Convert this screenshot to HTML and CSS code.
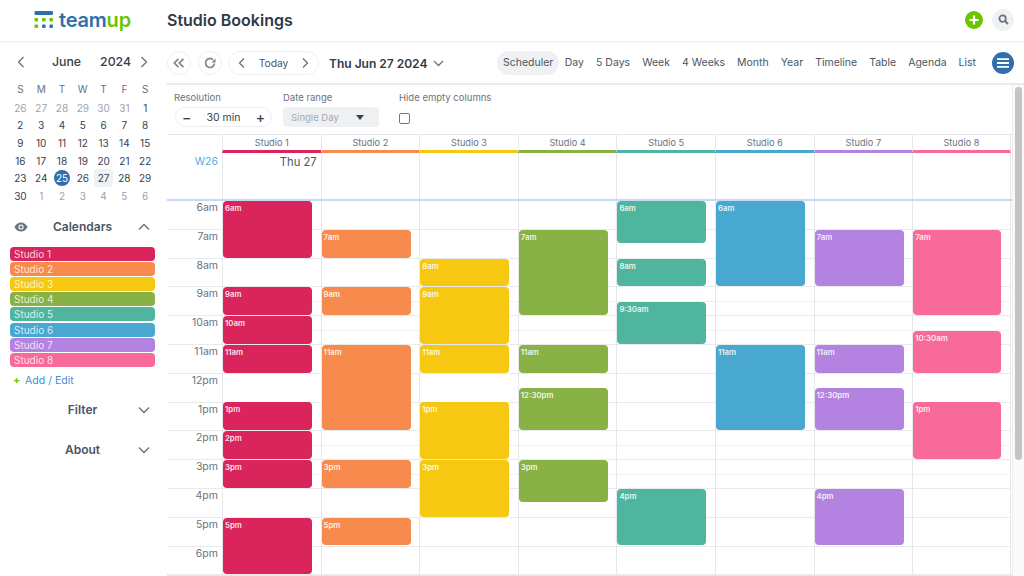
FILE: index.html
```html
<!DOCTYPE html>
<html lang="en">
  <head>
    <meta charset="UTF-8" />
    <meta name="viewport" content="width=device-width, initial-scale=1.0" />
    <title>Studio Bookings - Teamup</title>
    <link rel="stylesheet" href="styles.css">
  </head>
  <body>
    <div class="header">
      <div class="logo">
        <svg width="20" height="18" viewBox="0 0 20 18">
          <rect x="0.5" y="0" width="18.500" height="4" rx="1.200" fill="#2f6fad" />
          <g fill="#6cc400">
            <rect x="0.5" y="7" width="3.600" height="3.400" rx="1" />
            <rect x="8" y="7" width="3.600" height="3.400" rx="1" />
            <rect x="15.400" y="7" width="3.600" height="3.400" rx="1" />
            <rect x="0.5" y="13.500" width="3.600" height="3.400" rx="1" />
          </g>
          <g fill="#2f6fad">
            <rect x="8" y="13.500" width="3.600" height="3.400" rx="1" />
            <rect x="15.400" y="13.500" width="3.600" height="3.400" rx="1" />
          </g>
        </svg>
        <span class="logo-text">team<b>up</b></span>
      </div>
      <div class="page-title">Studio Bookings</div>
      <div class="header-actions">
        <button class="add-button">
          <svg width="10" height="10" viewBox="0 0 10 10"><path d="M5 0.5v9M0.5 5h9" stroke="#fff" stroke-width="2.200" /></svg>
        </button>
        <button class="search-button">
          <svg width="11" height="11" viewBox="0 0 11 11"><circle cx="4.600" cy="4.600" r="3.200" fill="none" stroke="#6b7280" stroke-width="1.800" /><path d="M7 7l3 3" stroke="#6b7280" stroke-width="2" /></svg>
        </button>
      </div>
    </div>

    <div class="page">
      <div class="sidebar">
        <div class="month-nav">
          <svg class="chev" width="8" height="12" viewBox="0 0 8 12"><path d="M6.500 1L1.500 6l5 5" /></svg>
          <span class="month-name">June</span>
          <span class="month-year">2024</span>
          <svg class="chev" width="8" height="12" viewBox="0 0 8 12"><path d="M1.500 1l5 5-5 5" /></svg>
        </div>
        <div class="mini-cal">
          <span class="dow">S</span><span class="dow">M</span><span class="dow">T</span><span class="dow">W</span><span class="dow">T</span><span class="dow">F</span><span class="dow">S</span>
          <span class="out">26</span><span class="out">27</span><span class="out">28</span><span class="out">29</span><span class="out">30</span><span class="out">31</span><span>1</span>
          <span>2</span><span>3</span><span>4</span><span>5</span><span>6</span><span>7</span><span>8</span>
          <span>9</span><span>10</span><span>11</span><span>12</span><span>13</span><span>14</span><span>15</span>
          <span>16</span><span>17</span><span>18</span><span>19</span><span>20</span><span>21</span><span>22</span>
          <span>23</span><span>24</span><span class="today">25</span><span>26</span><span class="picked">27</span><span>28</span><span>29</span>
          <span>30</span><span class="out">1</span><span class="out">2</span><span class="out">3</span><span class="out">4</span><span class="out">5</span><span class="out">6</span>
        </div>

        <div class="side-head calendars-head">
          <svg class="eye" width="14" height="10" viewBox="0 0 14 10"><path d="M0.500 5C2 2 4.300 0.500 7 0.500S12 2 13.500 5C12 8 9.700 9.500 7 9.500S2 8 0.500 5z" fill="#6b7280" /><circle cx="7" cy="5" r="2.600" fill="#fff" /><circle cx="7" cy="5" r="1.500" fill="#6b7280" /></svg>
          <span class="side-title">Calendars</span>
          <svg class="chev" width="12" height="8" viewBox="0 0 12 8"><path d="M1 6.500l5-5 5 5" /></svg>
        </div>
        <div class="cal-list">
          <div class="cal-item c1">Studio 1</div>
          <div class="cal-item c2">Studio 2</div>
          <div class="cal-item c3">Studio 3</div>
          <div class="cal-item c4">Studio 4</div>
          <div class="cal-item c5">Studio 5</div>
          <div class="cal-item c6">Studio 6</div>
          <div class="cal-item c7">Studio 7</div>
          <div class="cal-item c8">Studio 8</div>
        </div>
        <div class="add-edit"><b>+</b> Add / Edit</div>
        <div class="side-head filter-head">
          <span class="side-title">Filter</span>
          <svg class="chev" width="12" height="8" viewBox="0 0 12 8"><path d="M1 1.500l5 5 5-5" /></svg>
        </div>
        <div class="side-head about-head">
          <span class="side-title">About</span>
          <svg class="chev" width="12" height="8" viewBox="0 0 12 8"><path d="M1 1.500l5 5 5-5" /></svg>
        </div>
      </div>

      <div class="main">
        <div class="toolbar">
          <button class="round-button">
            <svg class="chev thick" width="12" height="10" viewBox="0 0 12 10"><path d="M5.500 0.800L1.300 5l4.200 4.200M10.500 0.800L6.300 5l4.200 4.200" /></svg>
          </button>
          <button class="round-button">
            <svg class="chev thick" width="12" height="12" viewBox="0 0 12 12"><path d="M10.500 6.500A4.500 4.500 0 1 1 9 2.600" /><path class="solid" d="M11.500 1.500v4H7.500z" /></svg>
          </button>
          <div class="today-group">
            <svg class="chev" width="8" height="12" viewBox="0 0 8 12"><path d="M6 1.500L1.500 6 6 10.500" /></svg>
            <span>Today</span>
            <svg class="chev" width="8" height="12" viewBox="0 0 8 12"><path d="M2 1.500L6.500 6 2 10.500" /></svg>
          </div>
          <div class="current-date">Thu Jun 27 2024</div>
          <svg class="chev date-chev" width="11" height="7" viewBox="0 0 11 7"><path d="M1 1l4.500 4.500L10 1" /></svg>
          <div class="views">
            <span class="view active">Scheduler</span>
            <span class="view">Day</span>
            <span class="view">5 Days</span>
            <span class="view">Week</span>
            <span class="view">4 Weeks</span>
            <span class="view">Month</span>
            <span class="view">Year</span>
            <span class="view">Timeline</span>
            <span class="view">Table</span>
            <span class="view">Agenda</span>
            <span class="view">List</span>
          </div>
          <button class="menu-button">
            <svg width="12" height="10" viewBox="0 0 12 10"><path d="M0 1.200h12M0 5h12M0 8.800h12" stroke="#fff" stroke-width="1.800" /></svg>
          </button>
        </div>

        <div class="scroll-area">
          <div class="calendar">
            <div class="options">
              <div class="option option-res">
                <label>Resolution</label>
                <div class="stepper"><b>−</b><span>30 min</span><b>+</b></div>
              </div>
              <div class="option option-range">
                <label>Date range</label>
                <div class="select"><span>Single Day</span><i></i></div>
              </div>
              <div class="option">
                <label>Hide empty columns</label>
                <div class="checkbox"></div>
              </div>
            </div>

            <div class="col-heads">
              <div class="gutter"></div>
              <div class="col-head b1">Studio 1</div>
              <div class="col-head b2">Studio 2</div>
              <div class="col-head b3">Studio 3</div>
              <div class="col-head b4">Studio 4</div>
              <div class="col-head b5">Studio 5</div>
              <div class="col-head b6">Studio 6</div>
              <div class="col-head b7">Studio 7</div>
              <div class="col-head b8">Studio 8</div>
            </div>

            <div class="all-day">
              <div class="gutter week-no">W26</div>
              <div class="all-day-cell day-label">Thu 27</div>
              <div class="all-day-cell"></div>
              <div class="all-day-cell"></div>
              <div class="all-day-cell"></div>
              <div class="all-day-cell"></div>
              <div class="all-day-cell"></div>
              <div class="all-day-cell"></div>
              <div class="all-day-cell"></div>
            </div>

            <div class="times">
              <div class="hours">
                <div class="hour">6am</div>
                <div class="hour">7am</div>
                <div class="hour">8am</div>
                <div class="hour">9am</div>
                <div class="hour">10am</div>
                <div class="hour">11am</div>
                <div class="hour">12pm</div>
                <div class="hour">1pm</div>
                <div class="hour">2pm</div>
                <div class="hour">3pm</div>
                <div class="hour">4pm</div>
                <div class="hour">5pm</div>
                <div class="hour">6pm</div>
              </div>

              <div class="day-col c1">
                <div class="event" style="grid-row: 1 / 5">6am</div>
                <div class="event" style="grid-row: 7 / 9">9am</div>
                <div class="event" style="grid-row: 9 / 11">10am</div>
                <div class="event" style="grid-row: 11 / 13">11am</div>
                <div class="event" style="grid-row: 15 / 17">1pm</div>
                <div class="event" style="grid-row: 17 / 19">2pm</div>
                <div class="event" style="grid-row: 19 / 21">3pm</div>
                <div class="event" style="grid-row: 23 / 27">5pm</div>
              </div>
              <div class="day-col c2">
                <div class="event" style="grid-row: 3 / 5">7am</div>
                <div class="event" style="grid-row: 7 / 9">9am</div>
                <div class="event" style="grid-row: 11 / 17">11am</div>
                <div class="event" style="grid-row: 19 / 21">3pm</div>
                <div class="event" style="grid-row: 23 / 25">5pm</div>
              </div>
              <div class="day-col c3">
                <div class="event" style="grid-row: 5 / 7">8am</div>
                <div class="event" style="grid-row: 7 / 11">9am</div>
                <div class="event" style="grid-row: 11 / 13">11am</div>
                <div class="event" style="grid-row: 15 / 19">1pm</div>
                <div class="event" style="grid-row: 19 / 23">3pm</div>
              </div>
              <div class="day-col c4">
                <div class="event" style="grid-row: 3 / 9">7am</div>
                <div class="event" style="grid-row: 11 / 13">11am</div>
                <div class="event" style="grid-row: 14 / 17">12:30pm</div>
                <div class="event" style="grid-row: 19 / 22">3pm</div>
              </div>
              <div class="day-col c5">
                <div class="event" style="grid-row: 1 / 4">6am</div>
                <div class="event" style="grid-row: 5 / 7">8am</div>
                <div class="event" style="grid-row: 8 / 11">9:30am</div>
                <div class="event" style="grid-row: 21 / 25">4pm</div>
              </div>
              <div class="day-col c6">
                <div class="event" style="grid-row: 1 / 7">6am</div>
                <div class="event" style="grid-row: 11 / 17">11am</div>
              </div>
              <div class="day-col c7">
                <div class="event" style="grid-row: 3 / 7">7am</div>
                <div class="event" style="grid-row: 11 / 13">11am</div>
                <div class="event" style="grid-row: 14 / 17">12:30pm</div>
                <div class="event" style="grid-row: 21 / 25">4pm</div>
              </div>
              <div class="day-col c8">
                <div class="event" style="grid-row: 3 / 9">7am</div>
                <div class="event" style="grid-row: 10 / 13">10:30am</div>
                <div class="event" style="grid-row: 15 / 19">1pm</div>
              </div>
            </div>
          </div>
          <div class="scrollbar"><div class="scroll-thumb"></div></div>
        </div>
      </div>
    </div>
  </body>
</html>
```

FILE: styles.css
```css
* {
  box-sizing: border-box;
}
body {
  margin: 0;
  height: 576px;
  overflow: hidden;
  background: #ffffff;
  color: #374151;
  font-family: "Inter", "Liberation Sans", sans-serif;
}
button {
  padding: 0;
  border: none;
  font-family: inherit;
}
.chev path {
  fill: none;
  stroke: #6b7280;
  stroke-width: 1.300;
}
.chev.thick path {
  stroke: #7b8594;
  stroke-width: 1.700;
}
.chev path.solid,
.chev.thick path.solid {
  fill: #7b8594;
  stroke: none;
}

/* Colours per calendar */
.c1 { --cal: #d9255c; }
.c2 { --cal: #f78b4d; }
.c3 { --cal: #f6c812; }
.c4 { --cal: #88b245; }
.c5 { --cal: #4fb59f; }
.c6 { --cal: #48a8cf; }
.c7 { --cal: #b482e0; }
.c8 { --cal: #f76a9a; }

/* Header */
.header {
  display: flex;
  align-items: center;
  height: 43px;
  padding: 0 10px 2px 34px;
  border-bottom: 2px solid #f3f4f6;
}
.logo {
  display: flex;
  align-items: center;
  gap: 5px;
  width: 133px;
}
.logo-text {
  font-size: 20px;
  font-weight: 600;
  letter-spacing: -0.2px;
  color: #2f6fad;
}
.logo-text b {
  font-weight: 600;
  color: #6cc400;
}
.page-title {
  font-size: 16px;
  font-weight: 600;
  color: #2f3a47;
}
.header-actions {
  display: flex;
  align-items: center;
  gap: 9px;
  margin-left: auto;
}
.add-button {
  display: flex;
  align-items: center;
  justify-content: center;
  width: 18px;
  height: 18px;
  border-radius: 50%;
  background: #6cc400;
}
.search-button {
  display: flex;
  align-items: center;
  justify-content: center;
  width: 22px;
  height: 22px;
  border-radius: 50%;
  background: #f0f1f3;
}

.page {
  display: flex;
  height: 533px;
}

/* Sidebar */
.sidebar {
  width: 167px;
  flex-shrink: 0;
  padding: 0 10px;
}
.month-nav {
  display: flex;
  align-items: center;
  width: 145px;
  height: 37px;
  padding: 0 7px;
}
.month-name {
  margin-left: 27px;
  font-size: 12.300px;
  font-weight: 500;
  color: #374151;
}
.month-year {
  margin: 0 auto 0 19px;
  font-size: 12.300px;
  font-weight: 500;
  color: #374151;
}
.mini-cal {
  display: grid;
  grid-template-columns: repeat(7, 20.800px);
  grid-template-rows: 19px;
  grid-auto-rows: 17.600px;
  width: 146px;
  font-size: 10px;
  text-align: center;
  color: #374151;
}
.mini-cal span {
  display: flex;
  align-items: center;
  justify-content: center;
}
.mini-cal .dow {
  height: 18px;
  color: #6b7280;
}
.mini-cal .out {
  color: #9ca3af;
}
.mini-cal .today {
  width: 16px;
  height: 16px;
  margin: 1px 2.400px;
  border-radius: 50%;
  background: #2f6fad;
  color: #ffffff;
}
.mini-cal .picked {
  margin: 0 0.500px;
  border-radius: 3px;
  background: #f0f1f3;
}
.side-head {
  display: flex;
  align-items: center;
  justify-content: center;
  position: relative;
}
.side-head .chev {
  position: absolute;
  right: 7px;
}
.side-head .eye {
  position: absolute;
  left: 4px;
}
.side-title {
  margin-right: 2px;
  font-size: 12px;
  font-weight: 600;
  color: #4b5563;
}
.calendars-head {
  height: 18px;
  margin-top: 13px;
}
.cal-list {
  display: flex;
  flex-direction: column;
  gap: 1.200px;
  width: 145px;
  margin-top: 11px;
}
.cal-item {
  height: 14px;
  padding-left: 4px;
  border-radius: 4px;
  background: var(--cal);
  color: rgba(255, 255, 255, 0.8);
  font-size: 10px;
  line-height: 15px;
}
.add-edit {
  margin: 7px 0 0 3px;
  color: #3f8fd6;
  font-size: 10.500px;
  line-height: 14px;
}
.add-edit b {
  margin-right: 2px;
  color: #6cc400;
}
.filter-head {
  height: 16px;
  margin-top: 14px;
}
.about-head {
  height: 16px;
  margin-top: 24px;
}

/* Toolbar */
.main {
  flex: 1;
  min-width: 0;
}
.toolbar {
  display: flex;
  align-items: center;
  height: 42px;
  padding-right: 10px;
  border-bottom: 2px solid #e9eaec;
}
.round-button {
  display: flex;
  align-items: center;
  justify-content: center;
  width: 24px;
  height: 24px;
  margin-right: 7px;
  border: 1px solid #eceef0;
  border-radius: 50%;
  background: #ffffff;
}
.today-group {
  display: flex;
  align-items: center;
  justify-content: space-between;
  width: 91px;
  height: 24px;
  margin-left: -1px;
  padding: 0 9px;
  border: 1px solid #eceef0;
  border-radius: 12px;
  font-size: 10.300px;
  color: #4b5563;
}
.current-date {
  margin-left: 10px;
  font-size: 12px;
  font-weight: 600;
  color: #2f3a47;
}
.date-chev {
  margin-left: 6px;
}
.views {
  display: flex;
  align-items: center;
  margin-left: auto;
  font-size: 10.500px;
  color: #4b5563;
}
.view {
  padding: 0 6px;
  line-height: 24px;
}
.view.active {
  padding: 0 5.500px;
  border-radius: 12px;
  background: #f0f1f3;
}
.menu-button {
  display: flex;
  align-items: center;
  justify-content: center;
  width: 22px;
  height: 22px;
  margin-left: 10px;
  border-radius: 50%;
  background: #2f6fad;
}

/* Calendar */
.scroll-area {
  display: flex;
  height: 491px;
}
.calendar {
  width: 845px;
  flex-shrink: 0;
}
.scrollbar {
  flex: 1;
  padding: 2px 0 0 2px;
  border-left: 1px solid #eeeeee;
  background: #fafafa;
}
.scroll-thumb {
  width: 7px;
  height: 373px;
  border-radius: 4px;
  background: #c4c4c4;
}
.options {
  display: flex;
  height: 50px;
  padding: 6px 0 0 7px;
  border-bottom: 1px solid #e5e7eb;
  font-size: 9.500px;
  color: #6b7280;
}
.option {
  display: flex;
  flex-direction: column;
}
.option label {
  height: 16px;
  line-height: 14px;
}
.option-res {
  width: 109px;
}
.option-range {
  width: 116px;
}
.stepper {
  display: flex;
  align-items: center;
  justify-content: space-between;
  width: 97px;
  height: 20px;
  margin-left: 1px;
  padding: 0 6px;
  border: 1px solid #eceef0;
  border-radius: 10px;
  font-size: 10.500px;
  color: #374151;
}
.stepper b {
  font-size: 14px;
  font-weight: 500;
}
.select {
  display: flex;
  align-items: center;
  justify-content: space-between;
  width: 96px;
  height: 20px;
  padding: 0 15px 0 8px;
  border-radius: 4px;
  background: #eef0f2;
  color: #a3a9b3;
  font-size: 9.500px;
}
.select i {
  border-top: 5px solid #374151;
  border-left: 4.500px solid transparent;
  border-right: 4.500px solid transparent;
}
.checkbox {
  width: 11px;
  height: 11px;
  margin-top: 6px;
  border: 1px solid #767676;
  border-radius: 2px;
  background: #ffffff;
}
.col-heads,
.all-day,
.times {
  display: grid;
  grid-template-columns: 55px repeat(8, 98.600px);
}
.col-heads {
  height: 18px;
}
.col-head {
  border-left: 1px solid #e5e7eb;
  border-bottom: 3px solid;
  color: #6b7280;
  font-size: 9.200px;
  line-height: 15px;
  text-align: center;
}
.col-head:last-child {
  border-right: 1px solid #e5e7eb;
}
.b1 { border-bottom-color: #d9255c; }
.b2 { border-bottom-color: #f78b4d; }
.b3 { border-bottom-color: #f6c812; }
.b4 { border-bottom-color: #88b245; }
.b5 { border-bottom-color: #4fb59f; }
.b6 { border-bottom-color: #48a8cf; }
.b7 { border-bottom-color: #b482e0; }
.b8 { border-bottom-color: #f76a9a; }
.all-day {
  height: 48px;
  border-bottom: 2px solid #c5daf9;
}
.all-day-cell {
  border-left: 1px solid #e5e7eb;
}
.all-day-cell:last-child {
  border-right: 1px solid #e5e7eb;
}
.week-no {
  padding: 2px 4px 0 0;
  color: #5aaae0;
  font-size: 10.500px;
  text-align: right;
}
.day-label {
  padding: 2px 4px 0 0;
  color: #4b5563;
  font-size: 11.200px;
  text-align: right;
}
.times {
  height: 375px;
  border-bottom: 2px solid #e5e7eb;
}
.hours {
  display: grid;
  grid-auto-rows: 28.800px;
}
.hour {
  padding-right: 4px;
  border-bottom: 1px solid #e9eaec;
  color: #6b7280;
  font-size: 10.500px;
  text-align: right;
}
.day-col {
  display: grid;
  grid-template-rows: repeat(26, 14.400px);
  padding-right: 8.500px;
  border-left: 1px solid #e5e7eb;
  background: repeating-linear-gradient(to bottom, transparent 0, transparent 13.900px, #f0f1f3 13.900px, #f0f1f3 14.400px, transparent 14.400px, transparent 27.800px, #e9eaec 27.800px, #e9eaec 28.800px);
}
.day-col:last-child {
  border-right: 1px solid #e5e7eb;
}
.event {
  grid-column: 1;
  margin-bottom: 1px;
  padding: 2px;
  border-radius: 4px;
  background: var(--cal);
  color: rgba(255, 255, 255, 0.9);
  font-size: 7.800px;
  font-weight: 600;
  line-height: 11px;
}
```
